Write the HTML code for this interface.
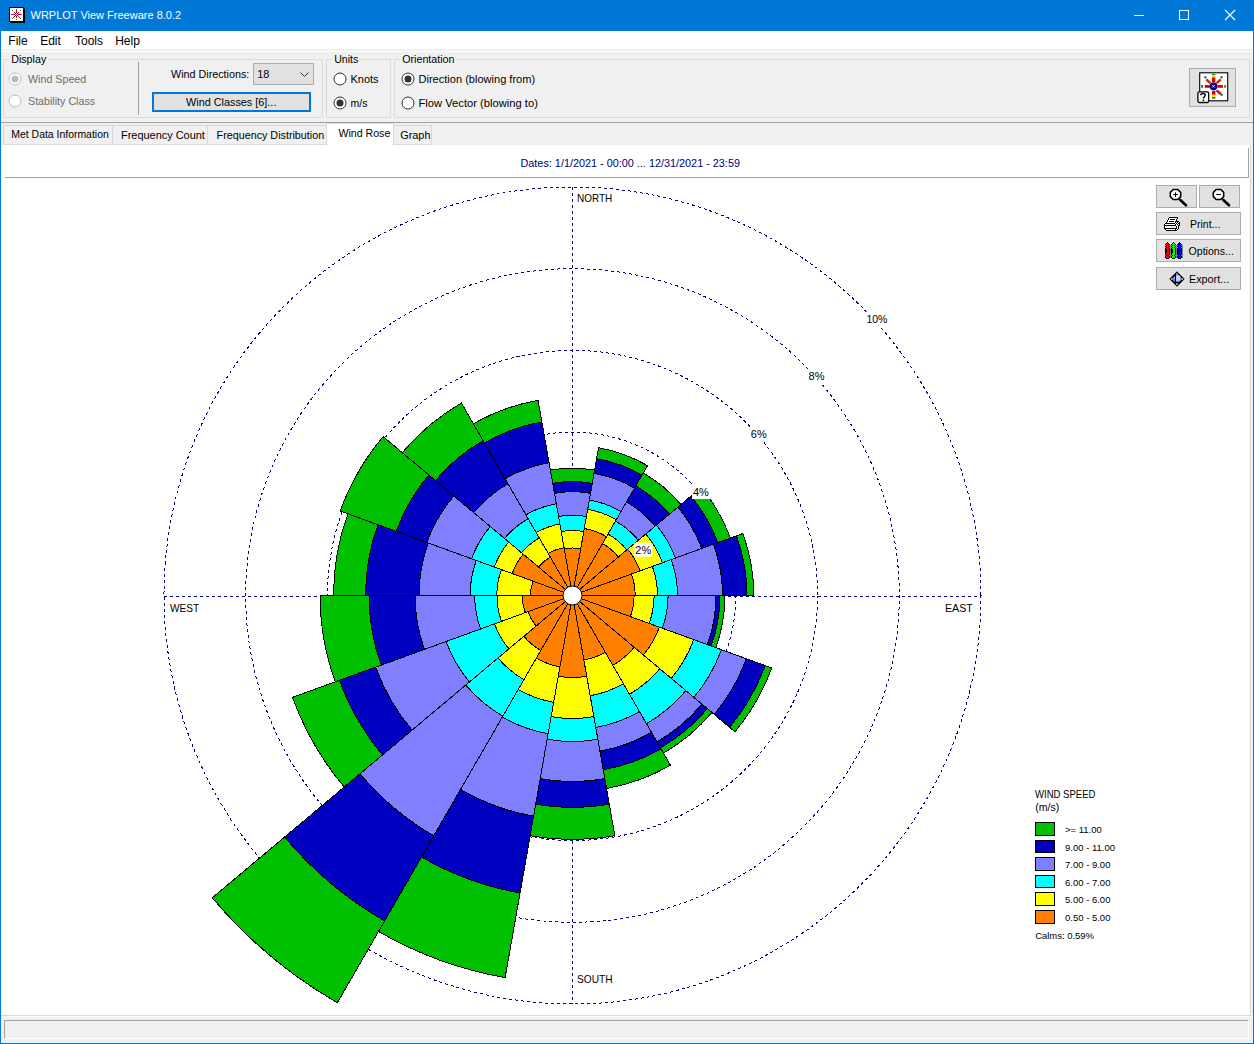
<!DOCTYPE html>
<html><head><meta charset="utf-8"><title>WRPLOT View Freeware 8.0.2</title>
<style>
html,body{margin:0;padding:0;}
body{width:1254px;height:1044px;position:relative;overflow:hidden;background:#F0F0F0;font-family:"Liberation Sans",sans-serif;}
.abs{position:absolute;}
.t{position:absolute;white-space:nowrap;}
svg text{font-family:"Liberation Sans",sans-serif;}
</style></head><body>
<div class="abs" style="left:0px;top:0px;width:1254px;height:31px;background:#0078D7"></div>
<svg class="abs" style="left:0;top:0" width="30" height="30" shape-rendering="crispEdges"><rect x="10" y="8" width="15" height="15" fill="#000"/><rect x="9" y="7" width="15" height="15" fill="#000"/><rect x="10" y="8" width="13" height="13" fill="#fff"/><rect x="16" y="9" width="1" height="1" fill="#008080"/><rect x="12" y="10" width="1" height="1" fill="#008080"/><rect x="16" y="10" width="1" height="1" fill="#FF0000"/><rect x="20" y="10" width="1" height="1" fill="#008080"/><rect x="13" y="11" width="1" height="1" fill="#FFFF00"/><rect x="16" y="11" width="1" height="1" fill="#FF0000"/><rect x="19" y="11" width="1" height="1" fill="#FFFF00"/><rect x="14" y="12" width="1" height="1" fill="#FF0000"/><rect x="16" y="12" width="1" height="1" fill="#000080"/><rect x="18" y="12" width="1" height="1" fill="#FF0000"/><rect x="15" y="13" width="1" height="1" fill="#000080"/><rect x="17" y="13" width="1" height="1" fill="#000080"/><rect x="11" y="14" width="1" height="1" fill="#008080"/><rect x="12" y="14" width="1" height="1" fill="#FF0000"/><rect x="13" y="14" width="1" height="1" fill="#FF0000"/><rect x="14" y="14" width="1" height="1" fill="#000080"/><rect x="16" y="14" width="1" height="1" fill="#FF0000"/><rect x="18" y="14" width="1" height="1" fill="#000080"/><rect x="19" y="14" width="1" height="1" fill="#FF0000"/><rect x="20" y="14" width="1" height="1" fill="#FF0000"/><rect x="21" y="14" width="1" height="1" fill="#008080"/><rect x="15" y="15" width="1" height="1" fill="#000080"/><rect x="17" y="15" width="1" height="1" fill="#000080"/><rect x="14" y="16" width="1" height="1" fill="#FF0000"/><rect x="16" y="16" width="1" height="1" fill="#000080"/><rect x="18" y="16" width="1" height="1" fill="#FF0000"/><rect x="13" y="17" width="1" height="1" fill="#FF0000"/><rect x="16" y="17" width="1" height="1" fill="#FF0000"/><rect x="19" y="17" width="1" height="1" fill="#FF0000"/><rect x="12" y="18" width="1" height="1" fill="#008080"/><rect x="16" y="18" width="1" height="1" fill="#FFFF00"/><rect x="20" y="18" width="1" height="1" fill="#008080"/><rect x="16" y="19" width="1" height="1" fill="#008080"/></svg>
<div class="t " style="left:30.5px;top:10.29px;font-size:11.0px;line-height:11.0px;color:#fff;">WRPLOT View Freeware 8.0.2</div>
<svg class="abs" style="left:1100px;top:0" width="154" height="31" shape-rendering="crispEdges"><rect x="34" y="15" width="10" height="1" fill="#fff"/><rect x="79.5" y="10.5" width="9" height="9" fill="none" stroke="#fff"/></svg>
<svg class="abs" style="left:1100px;top:0" width="154" height="31"><path d="M125,10 L135,20 M135,10 L125,20" stroke="#fff" stroke-width="1.1"/></svg>
<div class="abs" style="left:0px;top:31px;width:1px;height:1013px;background:#0078D7"></div>
<div class="abs" style="left:1253px;top:31px;width:1px;height:1013px;background:#0078D7"></div>
<div class="abs" style="left:0px;top:1043px;width:1254px;height:1px;background:#0078D7"></div>
<div class="abs" style="left:1px;top:31px;width:1252px;height:18px;background:#fff"></div>
<div class="t " style="left:8.3px;top:34.54px;font-size:12px;line-height:12px;color:#000;">File</div>
<div class="t " style="left:40.2px;top:34.54px;font-size:12px;line-height:12px;color:#000;">Edit</div>
<div class="t " style="left:75.0px;top:34.54px;font-size:12px;line-height:12px;color:#000;">Tools</div>
<div class="t " style="left:115.2px;top:34.54px;font-size:12px;line-height:12px;color:#000;">Help</div>
<div class="abs" style="left:1px;top:49px;width:1252px;height:73px;background:#F0F0F0"></div>
<div class="abs" style="left:1px;top:51px;width:1252px;height:1px;background:#FFFFFF"></div>
<div class="abs" style="left:1px;top:122px;width:1252px;height:1px;background:#A0A0A0"></div>
<div class="abs" style="left:3px;top:59px;width:320px;height:59px;border:1px solid #DCDCDC;box-sizing:border-box"></div>
<div class="abs" style="left:326px;top:59px;width:65px;height:59px;border:1px solid #DCDCDC;box-sizing:border-box"></div>
<div class="abs" style="left:394px;top:59px;width:856px;height:59px;border:1px solid #DCDCDC;box-sizing:border-box"></div>
<div class="abs" style="left:138px;top:62px;width:1px;height:53px;background:#A0A0A0"></div>
<div class="abs" style="left:9px;top:53px;width:40px;height:12px;background:#F0F0F0"></div>
<div class="t " style="left:11.2px;top:53.74px;font-size:10.7px;line-height:10.7px;color:#000;">Display</div>
<div class="abs" style="left:332px;top:53px;width:28px;height:12px;background:#F0F0F0"></div>
<div class="t " style="left:334.2px;top:54.03px;font-size:10.6px;line-height:10.6px;color:#000;">Units</div>
<div class="abs" style="left:400px;top:53px;width:56px;height:12px;background:#F0F0F0"></div>
<div class="t " style="left:402.2px;top:53.94px;font-size:10.7px;line-height:10.7px;color:#000;">Orientation</div>
<svg class="abs" style="left:8.3px;top:72.3px" width="14" height="14"><circle cx="7" cy="7" r="6" fill="#fff" stroke="#BCBCBC" stroke-width="1"/><circle cx="7" cy="7" r="3.5" fill="#BCBCBC"/></svg>
<div class="t " style="left:28.0px;top:73.84px;font-size:10.7px;line-height:10.7px;color:#6D6D6D;">Wind Speed</div>
<svg class="abs" style="left:8.3px;top:94.4px" width="14" height="14"><circle cx="7" cy="7" r="6" fill="#fff" stroke="#BCBCBC" stroke-width="1"/></svg>
<div class="t " style="left:28.0px;top:95.94px;font-size:10.7px;line-height:10.7px;color:#6D6D6D;">Stability Class</div>
<div class="t " style="left:171.0px;top:68.60px;font-size:10.75px;line-height:10.75px;color:#000;">Wind Directions:</div>
<div class="abs" style="left:253px;top:63px;width:61px;height:22px;background:#E1E1E1;border:1px solid #ADADAD;box-sizing:border-box"></div>
<div class="t " style="left:257.2px;top:69.19px;font-size:11px;line-height:11px;color:#000;">18</div>
<svg class="abs" style="left:299px;top:70px" width="12" height="10"><path d="M1.5,2.5 L5.5,6.5 L9.5,2.5" fill="none" stroke="#333" stroke-width="1"/></svg>
<div class="abs" style="left:152px;top:92px;width:159px;height:20px;background:#E1E1E1;border:2px solid #0078D7;box-sizing:border-box"></div>
<div class="t " style="left:186.0px;top:96.62px;font-size:10.85px;line-height:10.85px;color:#000;">Wind Classes [6]...</div>
<svg class="abs" style="left:333.1px;top:71.7px" width="14" height="14"><circle cx="7" cy="7" r="6" fill="#fff" stroke="#333333" stroke-width="1"/></svg>
<div class="t " style="left:350.5px;top:74.03px;font-size:10.95px;line-height:10.95px;color:#000;">Knots</div>
<svg class="abs" style="left:333.1px;top:95.6px" width="14" height="14"><circle cx="7" cy="7" r="6" fill="#fff" stroke="#333333" stroke-width="1"/><circle cx="7" cy="7" r="3.5" fill="#333333"/></svg>
<div class="t " style="left:350.5px;top:98.21px;font-size:10.5px;line-height:10.5px;color:#000;">m/s</div>
<svg class="abs" style="left:401.4px;top:71.7px" width="14" height="14"><circle cx="7" cy="7" r="6" fill="#fff" stroke="#333333" stroke-width="1"/><circle cx="7" cy="7" r="3.5" fill="#333333"/></svg>
<div class="t " style="left:418.5px;top:73.95px;font-size:11.05px;line-height:11.05px;color:#000;">Direction (blowing from)</div>
<svg class="abs" style="left:401.4px;top:95.6px" width="14" height="14"><circle cx="7" cy="7" r="6" fill="#fff" stroke="#333333" stroke-width="1"/></svg>
<div class="t " style="left:418.5px;top:97.62px;font-size:11.2px;line-height:11.2px;color:#000;">Flow Vector (blowing to)</div>
<div class="abs" style="left:1189px;top:68px;width:47px;height:39px;background:#E1E1E1;border:1px solid #ADADAD;box-sizing:border-box"></div>
<svg class="abs" style="left:1194px;top:70px" width="36" height="34"><rect x="5.7" y="2.8" width="28" height="28" fill="#fff" stroke="#000" stroke-width="1.1"/><rect x="18" y="4" width="3.4" height="1.2" fill="#208040"/><rect x="18" y="5.2" width="3.4" height="2.3" fill="#FFE000"/><rect x="18" y="7.5" width="3.4" height="5" fill="#E00000"/><rect x="18" y="20.8" width="3.4" height="4" fill="#E00000"/><rect x="18" y="24.8" width="3.4" height="2.2" fill="#FFE000"/><rect x="18" y="27" width="3.4" height="1.6" fill="#207050"/><rect x="7.2" y="15" width="1.8" height="2.8" fill="#207040"/><rect x="9" y="15" width="1.8" height="2.8" fill="#FFFF80"/><rect x="10.8" y="15" width="5" height="2.8" fill="#E00000"/><rect x="23.5" y="15" width="5.5" height="2.8" fill="#E00000"/><rect x="30.2" y="15" width="1.6" height="2.8" fill="#207050"/><g stroke-width="2.4"><line x1="12.3" y1="9.3" x2="16.5" y2="13.3" stroke="#C03000"/><line x1="26.7" y1="9.3" x2="22.5" y2="13.3" stroke="#C03000"/><line x1="22.5" y1="20.3" x2="26.7" y2="24" stroke="#E00000"/></g><rect x="10.3" y="6.2" width="2.2" height="2.2" fill="#207050" transform="rotate(45 11.4 7.3)"/><rect x="26.4" y="6.2" width="2.2" height="2.2" fill="#207050" transform="rotate(45 27.5 7.3)"/><rect x="26.6" y="23.7" width="2.2" height="2.2" fill="#207050" transform="rotate(45 27.7 24.8)"/><circle cx="19.5" cy="16.3" r="3.9" fill="#000090"/><path d="M18.3,15.1l2.4,2.4M20.7,15.1l-2.4,2.4" stroke="#fff" stroke-width="0.9"/><rect x="3.9" y="21.9" width="10.8" height="10.6" rx="1.5" fill="#FFFFE0" stroke="#000" stroke-width="1.3"/><path d="M6.8,25.3 C6.8,23.2 11.3,22.8 11.3,25 C11.3,26.6 9.3,26.8 9.3,28.6" fill="none" stroke="#000050" stroke-width="1.5"/><rect x="8.5" y="29.6" width="1.7" height="1.4" fill="#000050"/></svg>
<div class="abs" style="left:1px;top:123px;width:1252px;height:22px;background:#F0F0F0"></div>
<div class="abs" style="left:3px;top:125px;width:110px;height:20px;background:#F0F0F0;border:1px solid #D9D9D9;box-sizing:border-box"></div>
<div class="abs" style="left:112px;top:125px;width:96px;height:20px;background:#F0F0F0;border:1px solid #D9D9D9;box-sizing:border-box"></div>
<div class="abs" style="left:207px;top:125px;width:120px;height:20px;background:#F0F0F0;border:1px solid #D9D9D9;box-sizing:border-box"></div>
<div class="abs" style="left:392px;top:125px;width:40px;height:20px;background:#F0F0F0;border:1px solid #D9D9D9;box-sizing:border-box"></div>
<div class="abs" style="left:1px;top:145px;width:1250px;height:871px;background:#fff;border-right:1px solid #D9D9D9;border-bottom:1px solid #D9D9D9;box-sizing:border-box"></div>
<div class="abs" style="left:326px;top:123px;width:68px;height:23px;background:#fff;border:1px solid #D9D9D9;border-bottom:none;box-sizing:border-box"></div>
<div class="t " style="left:11.3px;top:130.15px;font-size:10.45px;line-height:10.45px;color:#000;">Met Data Information</div>
<div class="t " style="left:121.0px;top:129.73px;font-size:10.95px;line-height:10.95px;color:#000;">Frequency Count</div>
<div class="t " style="left:216.6px;top:129.90px;font-size:10.75px;line-height:10.75px;color:#000;">Frequency Distribution</div>
<div class="t " style="left:338.5px;top:128.03px;font-size:10.6px;line-height:10.6px;color:#000;">Wind Rose</div>
<div class="t " style="left:400.2px;top:129.77px;font-size:10.9px;line-height:10.9px;color:#000;">Graph</div>
<div class="abs" style="left:5px;top:148px;width:1244px;height:30px;border-right:1px solid #A0A0A0;border-bottom:1px solid #A0A0A0;box-sizing:border-box"></div>
<div class="t " style="left:520.5px;top:158.02px;font-size:10.85px;line-height:10.85px;color:#000080;">Dates: 1/1/2021 - 00:00 ... 12/31/2021 - 23:59</div>
<svg class="abs" style="left:0;top:0" width="1254" height="1044" viewBox="0 0 1254 1044" font-family="Liberation Sans, sans-serif">
<g fill="none" stroke="#000080" stroke-width="1" stroke-dasharray="3 3" shape-rendering="crispEdges">
<circle cx="572.5" cy="595.5" r="81.7"/>
<circle cx="572.5" cy="595.5" r="163.4"/>
<circle cx="572.5" cy="595.5" r="245.1"/>
<circle cx="572.5" cy="595.5" r="326.8"/>
<circle cx="572.5" cy="595.5" r="408.5"/>
<line x1="572.5" y1="187.0" x2="572.5" y2="1004.0"/>
<line x1="164.0" y1="596.5" x2="981.0" y2="596.5"/>
</g>
<g stroke="#000" stroke-width="1" stroke-linejoin="miter" shape-rendering="crispEdges">
<path fill="#00C000" d="M572.5,595.5L550.39,470.13A127.3,127.3 0 0 1 594.61,470.13ZM572.5,595.5L598.55,447.78A150,150 0 0 1 647.50,465.60ZM572.5,595.5L643.25,472.96A141.5,141.5 0 0 1 680.90,504.55ZM572.5,595.5L701.20,487.51A168,168 0 0 1 730.37,538.04ZM572.5,595.5L742.87,533.49A181.3,181.3 0 0 1 753.80,595.50ZM572.5,595.5L725.00,595.50A152.5,152.5 0 0 1 715.80,647.66ZM572.5,595.5L771.71,668.01A212,212 0 0 1 734.90,731.77ZM572.5,595.5L711.92,712.49A182,182 0 0 1 663.50,753.12ZM572.5,595.5L670.50,765.24A196,196 0 0 1 606.54,788.52ZM572.5,595.5L614.87,835.79A244,244 0 0 1 530.13,835.79ZM572.5,595.5L505.12,977.61A388,388 0 0 1 378.50,931.52ZM572.5,595.5L337.35,1002.79A470.3,470.3 0 0 1 212.23,897.80ZM572.5,595.5L344.22,787.05A298,298 0 0 1 292.47,697.42ZM572.5,595.5L335.32,681.83A252.4,252.4 0 0 1 320.10,595.50ZM572.5,595.5L333.50,595.50A239,239 0 0 1 347.91,513.76ZM572.5,595.5L340.21,510.95A247.2,247.2 0 0 1 383.13,436.60ZM572.5,595.5L402.28,452.67A222.2,222.2 0 0 1 461.40,403.07ZM572.5,595.5L473.40,423.85A198.2,198.2 0 0 1 538.08,400.31Z"/>
<path fill="#0000C0" d="M572.5,595.5L552.72,483.33A113.9,113.9 0 0 1 592.28,483.33ZM572.5,595.5L596.64,458.61A139,139 0 0 1 642.00,475.12ZM572.5,595.5L635.75,485.95A126.5,126.5 0 0 1 669.40,514.19ZM572.5,595.5L690.85,496.19A154.5,154.5 0 0 1 717.68,542.66ZM572.5,595.5L736.48,535.82A174.5,174.5 0 0 1 747.00,595.50ZM572.5,595.5L720.00,595.50A147.5,147.5 0 0 1 711.10,645.95ZM572.5,595.5L765.14,665.61A205,205 0 0 1 729.54,727.27ZM572.5,595.5L707.32,708.63A176,176 0 0 1 660.50,747.92ZM572.5,595.5L661.00,748.79A177,177 0 0 1 603.24,769.81ZM572.5,595.5L609.31,804.28A212,212 0 0 1 535.69,804.28ZM572.5,595.5L520.06,892.91A302,302 0 0 1 421.50,857.04ZM572.5,595.5L384.60,920.95A375.8,375.8 0 0 1 284.62,837.06ZM572.5,595.5L382.52,754.91A248,248 0 0 1 339.46,680.32ZM572.5,595.5L381.27,665.10A203.5,203.5 0 0 1 369.00,595.50ZM572.5,595.5L365.50,595.50A207,207 0 0 1 377.98,524.70ZM572.5,595.5L396.31,531.37A187.5,187.5 0 0 1 428.87,474.98ZM572.5,595.5L435.53,480.57A178.8,178.8 0 0 1 483.10,440.65ZM572.5,595.5L484.40,442.91A176.2,176.2 0 0 1 541.90,421.98Z"/>
<path fill="#8080FF" d="M572.5,595.5L554.48,493.28A103.8,103.8 0 0 1 590.52,493.28ZM572.5,595.5L594.03,473.38A124,124 0 0 1 634.50,488.11ZM572.5,595.5L626.50,501.97A108,108 0 0 1 655.23,526.08ZM572.5,595.5L677.83,507.12A137.5,137.5 0 0 1 701.71,548.47ZM572.5,595.5L713.45,544.20A150,150 0 0 1 722.50,595.50ZM572.5,595.5L716.00,595.50A143.5,143.5 0 0 1 707.35,644.58ZM572.5,595.5L746.34,658.77A185,185 0 0 1 714.22,714.42ZM572.5,595.5L701.96,704.13A169,169 0 0 1 657.00,741.86ZM572.5,595.5L651.50,732.33A158,158 0 0 1 599.94,751.10ZM572.5,595.5L604.80,778.67A186,186 0 0 1 540.20,778.67ZM572.5,595.5L533.60,816.10A224,224 0 0 1 460.50,789.49ZM572.5,595.5L433.80,835.74A277.4,277.4 0 0 1 360.00,773.81ZM572.5,595.5L412.01,730.16A209.5,209.5 0 0 1 375.63,667.15ZM572.5,595.5L424.50,649.37A157.5,157.5 0 0 1 415.00,595.50ZM572.5,595.5L419.00,595.50A153.5,153.5 0 0 1 428.26,543.00ZM572.5,595.5L426.85,542.49A155,155 0 0 1 453.76,495.87ZM572.5,595.5L473.68,512.58A129,129 0 0 1 508.00,483.78ZM572.5,595.5L505.10,478.76A134.8,134.8 0 0 1 549.09,462.75Z"/>
<path fill="#00FFFF" d="M572.5,595.5L558.56,516.42A80.3,80.3 0 0 1 586.44,516.42ZM572.5,595.5L589.34,499.97A97,97 0 0 1 621.00,511.50ZM572.5,595.5L615.50,521.02A86,86 0 0 1 638.38,540.22ZM572.5,595.5L656.38,525.11A109.5,109.5 0 0 1 675.40,558.05ZM572.5,595.5L671.17,559.59A105,105 0 0 1 677.50,595.50ZM572.5,595.5L668.10,595.50A95.6,95.6 0 0 1 662.33,628.20ZM572.5,595.5L721.44,649.71A158.5,158.5 0 0 1 693.92,697.38ZM572.5,595.5L685.87,690.63A148,148 0 0 1 646.50,723.67ZM572.5,595.5L639.50,711.55A134,134 0 0 1 595.77,727.46ZM572.5,595.5L597.85,739.28A146,146 0 0 1 547.15,739.28ZM572.5,595.5L548.14,733.67A140.3,140.3 0 0 1 502.35,717.00ZM572.5,595.5L502.85,716.14A139.3,139.3 0 0 1 465.79,685.04ZM572.5,595.5L469.47,681.95A134.5,134.5 0 0 1 446.11,641.50ZM572.5,595.5L480.60,628.95A97.8,97.8 0 0 1 474.70,595.50ZM572.5,595.5L470.10,595.50A102.4,102.4 0 0 1 476.28,560.48ZM572.5,595.5L471.58,558.77A107.4,107.4 0 0 1 490.23,526.46ZM572.5,595.5L504.55,538.48A88.7,88.7 0 0 1 528.15,518.68ZM572.5,595.5L525.90,514.79A93.2,93.2 0 0 1 556.32,503.72Z"/>
<path fill="#FFFF00" d="M572.5,595.5L561.21,531.49A65,65 0 0 1 583.79,531.49ZM572.5,595.5L587.69,509.33A87.5,87.5 0 0 1 616.25,519.72ZM572.5,595.5L608.00,534.01A71,71 0 0 1 626.89,549.86ZM572.5,595.5L645.81,533.99A95.7,95.7 0 0 1 662.43,562.77ZM572.5,595.5L652.37,566.43A85,85 0 0 1 657.50,595.50ZM572.5,595.5L654.10,595.50A81.6,81.6 0 0 1 649.18,623.41ZM572.5,595.5L693.72,639.62A129,129 0 0 1 671.32,678.42ZM572.5,595.5L659.83,668.78A114,114 0 0 1 629.50,694.23ZM572.5,595.5L623.40,683.66A101.8,101.8 0 0 1 590.18,695.75ZM572.5,595.5L593.86,716.63A123,123 0 0 1 551.14,716.63ZM572.5,595.5L553.66,702.35A108.5,108.5 0 0 1 518.25,689.46ZM572.5,595.5L523.90,679.68A97.2,97.2 0 0 1 498.04,657.98ZM572.5,595.5L508.92,648.85A83,83 0 0 1 494.51,623.89ZM572.5,595.5L501.55,621.32A75.5,75.5 0 0 1 497.00,595.50ZM572.5,595.5L496.80,595.50A75.7,75.7 0 0 1 501.37,569.61ZM572.5,595.5L494.32,567.04A83.2,83.2 0 0 1 508.77,542.02ZM572.5,595.5L521.56,552.75A66.5,66.5 0 0 1 539.25,537.91ZM572.5,595.5L536.20,532.63A72.6,72.6 0 0 1 559.89,524.00Z"/>
<path fill="#FF8000" d="M572.5,595.5L564.25,548.72A47.5,47.5 0 0 1 580.75,548.72ZM572.5,595.5L584.31,528.53A68,68 0 0 1 606.50,536.61ZM572.5,595.5L602.50,543.54A60,60 0 0 1 618.46,556.93ZM572.5,595.5L627.66,549.22A72,72 0 0 1 640.16,570.87ZM572.5,595.5L631.42,574.06A62.7,62.7 0 0 1 635.20,595.50ZM572.5,595.5L634.10,595.50A61.6,61.6 0 0 1 630.39,616.57ZM572.5,595.5L659.42,627.14A92.5,92.5 0 0 1 643.36,654.96ZM572.5,595.5L634.24,647.31A80.6,80.6 0 0 1 612.80,665.30ZM572.5,595.5L605.25,652.22A65.5,65.5 0 0 1 583.87,660.00ZM572.5,595.5L586.74,676.25A82,82 0 0 1 558.26,676.25ZM572.5,595.5L559.93,666.80A72.4,72.4 0 0 1 536.30,658.20ZM572.5,595.5L540.75,650.49A63.5,63.5 0 0 1 523.86,636.32ZM572.5,595.5L536.11,626.03A47.5,47.5 0 0 1 527.86,611.75ZM572.5,595.5L525.33,612.67A50.2,50.2 0 0 1 522.30,595.50ZM572.5,595.5L530.50,595.50A42,42 0 0 1 533.03,581.14ZM572.5,595.5L512.17,573.54A64.2,64.2 0 0 1 523.32,554.23ZM572.5,595.5L538.49,566.96A44.4,44.4 0 0 1 550.30,557.05ZM572.5,595.5L548.20,553.41A48.6,48.6 0 0 1 564.06,547.64Z"/>
</g>
<circle cx="572.5" cy="595.5" r="9.5" fill="#fff" stroke="#000" stroke-width="1"/>
<rect x="634.3" y="542.7" width="18" height="14" fill="#fff"/>
<text x="635.3" y="553.7" font-size="11" fill="#000">2%</text>
<rect x="692.0" y="485.0" width="18" height="14" fill="#fff"/>
<text x="693.0" y="496.0" font-size="11" fill="#000">4%</text>
<rect x="749.8" y="427.2" width="18" height="14" fill="#fff"/>
<text x="750.8" y="438.2" font-size="11" fill="#000">6%</text>
<rect x="807.6" y="369.4" width="18" height="14" fill="#fff"/>
<text x="808.6" y="380.4" font-size="11" fill="#000">8%</text>
<rect x="865.4" y="311.6" width="24" height="14" fill="#fff"/>
<text x="866.4" y="322.6" font-size="10.5" fill="#000">10%</text>
<text x="577" y="202" font-size="10.8" textLength="35.3" lengthAdjust="spacingAndGlyphs">NORTH</text>
<text x="577" y="983" font-size="10.8" textLength="35.5" lengthAdjust="spacingAndGlyphs">SOUTH</text>
<text x="170" y="612" font-size="10.8" textLength="29.2" lengthAdjust="spacingAndGlyphs">WEST</text>
<text x="945" y="612" font-size="10.8" textLength="27.9" lengthAdjust="spacingAndGlyphs">EAST</text>
</svg>
<div class="abs" style="left:1156px;top:185px;width:41px;height:23px;background:#E1E1E1;border:1px solid #ADADAD;box-sizing:border-box"></div>
<div class="abs" style="left:1199px;top:185px;width:41px;height:23px;background:#E1E1E1;border:1px solid #ADADAD;box-sizing:border-box"></div>
<svg class="abs" style="left:1156px;top:185px" width="84" height="23"><polygon points="17.2,4.5 21.8,4.5 24.7,7.4 24.7,11.6 21.8,14.5 17.2,14.5 14.3,11.6 14.3,7.4" fill="#fff" stroke="#000" stroke-width="1.5"/><path d="M17.2,9.5h4.6M19.5,7.2v4.8" stroke="#000" stroke-width="1.1"/><path d="M24.3,15 L30,20.3" stroke="#000" stroke-width="2.6" stroke-linecap="round"/><polygon points="60.2,4.5 64.8,4.5 67.7,7.4 67.7,11.6 64.8,14.5 60.2,14.5 57.3,11.6 57.3,7.4" fill="#fff" stroke="#000" stroke-width="1.5"/><path d="M60.2,9.5h4.6" stroke="#000" stroke-width="1.1"/><path d="M67.3,15 L73,20.3" stroke="#000" stroke-width="2.6" stroke-linecap="round"/></svg>
<div class="abs" style="left:1156px;top:212px;width:85px;height:23px;background:#E1E1E1;border:1px solid #ADADAD;box-sizing:border-box"></div>
<div class="abs" style="left:1156px;top:239px;width:85px;height:23px;background:#E1E1E1;border:1px solid #ADADAD;box-sizing:border-box"></div>
<div class="abs" style="left:1156px;top:267px;width:85px;height:23px;background:#E1E1E1;border:1px solid #ADADAD;box-sizing:border-box"></div>
<div class="t " style="left:1190.0px;top:219.21px;font-size:10.5px;line-height:10.5px;color:#000;">Print...</div>
<div class="t " style="left:1188.5px;top:246.23px;font-size:10.6px;line-height:10.6px;color:#000;">Options...</div>
<div class="t " style="left:1189.0px;top:273.86px;font-size:10.8px;line-height:10.8px;color:#000;">Export...</div>
<svg class="abs" style="left:1164px;top:217px" width="16" height="14" shape-rendering="crispEdges"><rect x="5" y="0" width="1" height="1" fill="#000"/><rect x="6" y="0" width="1" height="1" fill="#000"/><rect x="7" y="0" width="1" height="1" fill="#000"/><rect x="8" y="0" width="1" height="1" fill="#000"/><rect x="9" y="0" width="1" height="1" fill="#000"/><rect x="10" y="0" width="1" height="1" fill="#000"/><rect x="11" y="0" width="1" height="1" fill="#000"/><rect x="12" y="0" width="1" height="1" fill="#000"/><rect x="13" y="0" width="1" height="1" fill="#000"/><rect x="4" y="1" width="1" height="1" fill="#000"/><rect x="5" y="1" width="1" height="1" fill="#fff"/><rect x="6" y="1" width="1" height="1" fill="#fff"/><rect x="7" y="1" width="1" height="1" fill="#fff"/><rect x="8" y="1" width="1" height="1" fill="#fff"/><rect x="9" y="1" width="1" height="1" fill="#fff"/><rect x="10" y="1" width="1" height="1" fill="#fff"/><rect x="11" y="1" width="1" height="1" fill="#fff"/><rect x="12" y="1" width="1" height="1" fill="#fff"/><rect x="13" y="1" width="1" height="1" fill="#000"/><rect x="4" y="2" width="1" height="1" fill="#000"/><rect x="5" y="2" width="1" height="1" fill="#fff"/><rect x="6" y="2" width="1" height="1" fill="#000"/><rect x="7" y="2" width="1" height="1" fill="#000"/><rect x="8" y="2" width="1" height="1" fill="#000"/><rect x="9" y="2" width="1" height="1" fill="#000"/><rect x="10" y="2" width="1" height="1" fill="#000"/><rect x="11" y="2" width="1" height="1" fill="#fff"/><rect x="12" y="2" width="1" height="1" fill="#000"/><rect x="3" y="3" width="1" height="1" fill="#000"/><rect x="4" y="3" width="1" height="1" fill="#fff"/><rect x="5" y="3" width="1" height="1" fill="#fff"/><rect x="6" y="3" width="1" height="1" fill="#fff"/><rect x="7" y="3" width="1" height="1" fill="#fff"/><rect x="8" y="3" width="1" height="1" fill="#fff"/><rect x="9" y="3" width="1" height="1" fill="#fff"/><rect x="10" y="3" width="1" height="1" fill="#fff"/><rect x="11" y="3" width="1" height="1" fill="#fff"/><rect x="12" y="3" width="1" height="1" fill="#000"/><rect x="3" y="4" width="1" height="1" fill="#000"/><rect x="4" y="4" width="1" height="1" fill="#fff"/><rect x="5" y="4" width="1" height="1" fill="#000"/><rect x="6" y="4" width="1" height="1" fill="#000"/><rect x="7" y="4" width="1" height="1" fill="#000"/><rect x="8" y="4" width="1" height="1" fill="#000"/><rect x="9" y="4" width="1" height="1" fill="#000"/><rect x="10" y="4" width="1" height="1" fill="#fff"/><rect x="11" y="4" width="1" height="1" fill="#000"/><rect x="12" y="4" width="1" height="1" fill="#000"/><rect x="13" y="4" width="1" height="1" fill="#000"/><rect x="14" y="4" width="1" height="1" fill="#000"/><rect x="2" y="5" width="1" height="1" fill="#000"/><rect x="3" y="5" width="1" height="1" fill="#fff"/><rect x="4" y="5" width="1" height="1" fill="#fff"/><rect x="5" y="5" width="1" height="1" fill="#fff"/><rect x="6" y="5" width="1" height="1" fill="#fff"/><rect x="7" y="5" width="1" height="1" fill="#fff"/><rect x="8" y="5" width="1" height="1" fill="#fff"/><rect x="9" y="5" width="1" height="1" fill="#fff"/><rect x="10" y="5" width="1" height="1" fill="#fff"/><rect x="11" y="5" width="1" height="1" fill="#000"/><rect x="12" y="5" width="1" height="1" fill="#fff"/><rect x="13" y="5" width="1" height="1" fill="#000"/><rect x="14" y="5" width="1" height="1" fill="#fff"/><rect x="15" y="5" width="1" height="1" fill="#000"/><rect x="1" y="6" width="1" height="1" fill="#000"/><rect x="2" y="6" width="1" height="1" fill="#000"/><rect x="3" y="6" width="1" height="1" fill="#000"/><rect x="4" y="6" width="1" height="1" fill="#000"/><rect x="5" y="6" width="1" height="1" fill="#000"/><rect x="6" y="6" width="1" height="1" fill="#000"/><rect x="7" y="6" width="1" height="1" fill="#000"/><rect x="8" y="6" width="1" height="1" fill="#000"/><rect x="9" y="6" width="1" height="1" fill="#000"/><rect x="10" y="6" width="1" height="1" fill="#000"/><rect x="11" y="6" width="1" height="1" fill="#fff"/><rect x="12" y="6" width="1" height="1" fill="#000"/><rect x="13" y="6" width="1" height="1" fill="#fff"/><rect x="14" y="6" width="1" height="1" fill="#000"/><rect x="15" y="6" width="1" height="1" fill="#000"/><rect x="0" y="7" width="1" height="1" fill="#000"/><rect x="1" y="7" width="1" height="1" fill="#fff"/><rect x="2" y="7" width="1" height="1" fill="#fff"/><rect x="3" y="7" width="1" height="1" fill="#fff"/><rect x="4" y="7" width="1" height="1" fill="#fff"/><rect x="5" y="7" width="1" height="1" fill="#fff"/><rect x="6" y="7" width="1" height="1" fill="#fff"/><rect x="7" y="7" width="1" height="1" fill="#fff"/><rect x="8" y="7" width="1" height="1" fill="#fff"/><rect x="9" y="7" width="1" height="1" fill="#fff"/><rect x="10" y="7" width="1" height="1" fill="#fff"/><rect x="11" y="7" width="1" height="1" fill="#000"/><rect x="12" y="7" width="1" height="1" fill="#fff"/><rect x="13" y="7" width="1" height="1" fill="#000"/><rect x="14" y="7" width="1" height="1" fill="#fff"/><rect x="15" y="7" width="1" height="1" fill="#000"/><rect x="0" y="8" width="1" height="1" fill="#000"/><rect x="1" y="8" width="1" height="1" fill="#000"/><rect x="2" y="8" width="1" height="1" fill="#000"/><rect x="3" y="8" width="1" height="1" fill="#000"/><rect x="4" y="8" width="1" height="1" fill="#000"/><rect x="5" y="8" width="1" height="1" fill="#000"/><rect x="6" y="8" width="1" height="1" fill="#000"/><rect x="7" y="8" width="1" height="1" fill="#000"/><rect x="8" y="8" width="1" height="1" fill="#000"/><rect x="9" y="8" width="1" height="1" fill="#000"/><rect x="10" y="8" width="1" height="1" fill="#000"/><rect x="11" y="8" width="1" height="1" fill="#000"/><rect x="12" y="8" width="1" height="1" fill="#fff"/><rect x="13" y="8" width="1" height="1" fill="#fff"/><rect x="14" y="8" width="1" height="1" fill="#000"/><rect x="15" y="8" width="1" height="1" fill="#000"/><rect x="0" y="9" width="1" height="1" fill="#000"/><rect x="1" y="9" width="1" height="1" fill="#fff"/><rect x="2" y="9" width="1" height="1" fill="#fff"/><rect x="3" y="9" width="1" height="1" fill="#fff"/><rect x="4" y="9" width="1" height="1" fill="#fff"/><rect x="5" y="9" width="1" height="1" fill="#fff"/><rect x="6" y="9" width="1" height="1" fill="#fff"/><rect x="7" y="9" width="1" height="1" fill="#fff"/><rect x="8" y="9" width="1" height="1" fill="#fff"/><rect x="9" y="9" width="1" height="1" fill="#fff"/><rect x="10" y="9" width="1" height="1" fill="#fff"/><rect x="11" y="9" width="1" height="1" fill="#fff"/><rect x="12" y="9" width="1" height="1" fill="#000"/><rect x="13" y="9" width="1" height="1" fill="#fff"/><rect x="14" y="9" width="1" height="1" fill="#000"/><rect x="0" y="10" width="1" height="1" fill="#000"/><rect x="1" y="10" width="1" height="1" fill="#fff"/><rect x="2" y="10" width="1" height="1" fill="#fff"/><rect x="3" y="10" width="1" height="1" fill="#fff"/><rect x="4" y="10" width="1" height="1" fill="#fff"/><rect x="5" y="10" width="1" height="1" fill="#fff"/><rect x="6" y="10" width="1" height="1" fill="#fff"/><rect x="7" y="10" width="1" height="1" fill="#FFFF00"/><rect x="8" y="10" width="1" height="1" fill="#FFFF00"/><rect x="9" y="10" width="1" height="1" fill="#FFFF00"/><rect x="10" y="10" width="1" height="1" fill="#fff"/><rect x="11" y="10" width="1" height="1" fill="#fff"/><rect x="12" y="10" width="1" height="1" fill="#000"/><rect x="13" y="10" width="1" height="1" fill="#fff"/><rect x="14" y="10" width="1" height="1" fill="#000"/><rect x="0" y="11" width="1" height="1" fill="#000"/><rect x="1" y="11" width="1" height="1" fill="#000"/><rect x="2" y="11" width="1" height="1" fill="#000"/><rect x="3" y="11" width="1" height="1" fill="#000"/><rect x="4" y="11" width="1" height="1" fill="#000"/><rect x="5" y="11" width="1" height="1" fill="#000"/><rect x="6" y="11" width="1" height="1" fill="#000"/><rect x="7" y="11" width="1" height="1" fill="#000"/><rect x="8" y="11" width="1" height="1" fill="#000"/><rect x="9" y="11" width="1" height="1" fill="#000"/><rect x="10" y="11" width="1" height="1" fill="#000"/><rect x="11" y="11" width="1" height="1" fill="#000"/><rect x="12" y="11" width="1" height="1" fill="#000"/><rect x="13" y="11" width="1" height="1" fill="#fff"/><rect x="14" y="11" width="1" height="1" fill="#000"/><rect x="1" y="12" width="1" height="1" fill="#000"/><rect x="2" y="12" width="1" height="1" fill="#fff"/><rect x="3" y="12" width="1" height="1" fill="#fff"/><rect x="4" y="12" width="1" height="1" fill="#fff"/><rect x="5" y="12" width="1" height="1" fill="#fff"/><rect x="6" y="12" width="1" height="1" fill="#fff"/><rect x="7" y="12" width="1" height="1" fill="#fff"/><rect x="8" y="12" width="1" height="1" fill="#fff"/><rect x="9" y="12" width="1" height="1" fill="#fff"/><rect x="10" y="12" width="1" height="1" fill="#fff"/><rect x="11" y="12" width="1" height="1" fill="#000"/><rect x="12" y="12" width="1" height="1" fill="#fff"/><rect x="13" y="12" width="1" height="1" fill="#000"/><rect x="2" y="13" width="1" height="1" fill="#000"/><rect x="3" y="13" width="1" height="1" fill="#000"/><rect x="4" y="13" width="1" height="1" fill="#000"/><rect x="5" y="13" width="1" height="1" fill="#000"/><rect x="6" y="13" width="1" height="1" fill="#000"/><rect x="7" y="13" width="1" height="1" fill="#000"/><rect x="8" y="13" width="1" height="1" fill="#000"/><rect x="9" y="13" width="1" height="1" fill="#000"/><rect x="10" y="13" width="1" height="1" fill="#000"/><rect x="11" y="13" width="1" height="1" fill="#000"/><rect x="12" y="13" width="1" height="1" fill="#000"/></svg>
<svg class="abs" style="left:1165px;top:242px" width="20" height="17" shape-rendering="crispEdges"><rect x="5" y="3" width="1" height="13" fill="#808080"/><rect x="11" y="3" width="1" height="13" fill="#808080"/><rect x="17" y="3" width="1" height="13" fill="#808080"/><rect x="2" y="0" width="1" height="1" fill="#000"/><rect x="1" y="1" width="1" height="1" fill="#000"/><rect x="2" y="1" width="1" height="1" fill="#FF0000"/><rect x="3" y="1" width="1" height="1" fill="#000"/><rect x="0" y="2" width="1" height="1" fill="#000"/><rect x="1" y="2" width="1" height="1" fill="#FF0000"/><rect x="2" y="2" width="1" height="1" fill="#FF0000"/><rect x="3" y="2" width="1" height="1" fill="#FF0000"/><rect x="4" y="2" width="1" height="1" fill="#000"/><rect x="0" y="3" width="1" height="1" fill="#808080"/><rect x="1" y="3" width="1" height="1" fill="#000"/><rect x="2" y="3" width="1" height="1" fill="#FF0000"/><rect x="3" y="3" width="1" height="1" fill="#000"/><rect x="4" y="3" width="1" height="1" fill="#808080"/><rect x="0" y="4" width="1" height="1" fill="#000"/><rect x="1" y="4" width="1" height="1" fill="#FF0000"/><rect x="2" y="4" width="1" height="1" fill="#FF0000"/><rect x="3" y="4" width="1" height="1" fill="#FF0000"/><rect x="4" y="4" width="1" height="1" fill="#000"/><rect x="0" y="5" width="1" height="1" fill="#808080"/><rect x="1" y="5" width="1" height="1" fill="#000"/><rect x="2" y="5" width="1" height="1" fill="#FF0000"/><rect x="3" y="5" width="1" height="1" fill="#000"/><rect x="4" y="5" width="1" height="1" fill="#808080"/><rect x="0" y="6" width="1" height="1" fill="#000"/><rect x="1" y="6" width="1" height="1" fill="#FF0000"/><rect x="2" y="6" width="1" height="1" fill="#FF0000"/><rect x="3" y="6" width="1" height="1" fill="#FF0000"/><rect x="4" y="6" width="1" height="1" fill="#000"/><rect x="0" y="7" width="1" height="1" fill="#000"/><rect x="1" y="7" width="1" height="1" fill="#000"/><rect x="2" y="7" width="1" height="1" fill="#FF0000"/><rect x="3" y="7" width="1" height="1" fill="#FF0000"/><rect x="4" y="7" width="1" height="1" fill="#000"/><rect x="0" y="8" width="1" height="1" fill="#000"/><rect x="1" y="8" width="1" height="1" fill="#000"/><rect x="2" y="8" width="1" height="1" fill="#FF0000"/><rect x="3" y="8" width="1" height="1" fill="#FF0000"/><rect x="4" y="8" width="1" height="1" fill="#000"/><rect x="0" y="9" width="1" height="1" fill="#000"/><rect x="1" y="9" width="1" height="1" fill="#000"/><rect x="2" y="9" width="1" height="1" fill="#FF0000"/><rect x="3" y="9" width="1" height="1" fill="#FF0000"/><rect x="4" y="9" width="1" height="1" fill="#000"/><rect x="0" y="10" width="1" height="1" fill="#000"/><rect x="1" y="10" width="1" height="1" fill="#000"/><rect x="2" y="10" width="1" height="1" fill="#FF0000"/><rect x="3" y="10" width="1" height="1" fill="#FF0000"/><rect x="4" y="10" width="1" height="1" fill="#000"/><rect x="0" y="11" width="1" height="1" fill="#000"/><rect x="1" y="11" width="1" height="1" fill="#FF0000"/><rect x="2" y="11" width="1" height="1" fill="#FF0000"/><rect x="3" y="11" width="1" height="1" fill="#FF0000"/><rect x="4" y="11" width="1" height="1" fill="#000"/><rect x="0" y="12" width="1" height="1" fill="#000"/><rect x="1" y="12" width="1" height="1" fill="#FF0000"/><rect x="2" y="12" width="1" height="1" fill="#FF0000"/><rect x="3" y="12" width="1" height="1" fill="#FF0000"/><rect x="4" y="12" width="1" height="1" fill="#000"/><rect x="0" y="13" width="1" height="1" fill="#808080"/><rect x="1" y="13" width="1" height="1" fill="#000"/><rect x="2" y="13" width="1" height="1" fill="#FF0000"/><rect x="3" y="13" width="1" height="1" fill="#000"/><rect x="4" y="13" width="1" height="1" fill="#808080"/><rect x="0" y="14" width="1" height="1" fill="#000"/><rect x="1" y="14" width="1" height="1" fill="#FF0000"/><rect x="2" y="14" width="1" height="1" fill="#FF0000"/><rect x="3" y="14" width="1" height="1" fill="#FF0000"/><rect x="4" y="14" width="1" height="1" fill="#000"/><rect x="0" y="15" width="1" height="1" fill="#000"/><rect x="1" y="15" width="1" height="1" fill="#FF0000"/><rect x="2" y="15" width="1" height="1" fill="#FF0000"/><rect x="3" y="15" width="1" height="1" fill="#FF0000"/><rect x="4" y="15" width="1" height="1" fill="#000"/><rect x="1" y="16" width="1" height="1" fill="#000"/><rect x="2" y="16" width="1" height="1" fill="#000"/><rect x="3" y="16" width="1" height="1" fill="#000"/><rect x="8" y="0" width="1" height="1" fill="#000"/><rect x="7" y="1" width="1" height="1" fill="#000"/><rect x="8" y="1" width="1" height="1" fill="#00FF00"/><rect x="9" y="1" width="1" height="1" fill="#000"/><rect x="6" y="2" width="1" height="1" fill="#000"/><rect x="7" y="2" width="1" height="1" fill="#00FF00"/><rect x="8" y="2" width="1" height="1" fill="#00FF00"/><rect x="9" y="2" width="1" height="1" fill="#00FF00"/><rect x="10" y="2" width="1" height="1" fill="#000"/><rect x="6" y="3" width="1" height="1" fill="#808080"/><rect x="7" y="3" width="1" height="1" fill="#000"/><rect x="8" y="3" width="1" height="1" fill="#00FF00"/><rect x="9" y="3" width="1" height="1" fill="#000"/><rect x="10" y="3" width="1" height="1" fill="#808080"/><rect x="6" y="4" width="1" height="1" fill="#000"/><rect x="7" y="4" width="1" height="1" fill="#00FF00"/><rect x="8" y="4" width="1" height="1" fill="#00FF00"/><rect x="9" y="4" width="1" height="1" fill="#00FF00"/><rect x="10" y="4" width="1" height="1" fill="#000"/><rect x="6" y="5" width="1" height="1" fill="#808080"/><rect x="7" y="5" width="1" height="1" fill="#000"/><rect x="8" y="5" width="1" height="1" fill="#00FF00"/><rect x="9" y="5" width="1" height="1" fill="#000"/><rect x="10" y="5" width="1" height="1" fill="#808080"/><rect x="6" y="6" width="1" height="1" fill="#000"/><rect x="7" y="6" width="1" height="1" fill="#00FF00"/><rect x="8" y="6" width="1" height="1" fill="#00FF00"/><rect x="9" y="6" width="1" height="1" fill="#00FF00"/><rect x="10" y="6" width="1" height="1" fill="#000"/><rect x="6" y="7" width="1" height="1" fill="#000"/><rect x="7" y="7" width="1" height="1" fill="#000"/><rect x="8" y="7" width="1" height="1" fill="#00FF00"/><rect x="9" y="7" width="1" height="1" fill="#00FF00"/><rect x="10" y="7" width="1" height="1" fill="#000"/><rect x="6" y="8" width="1" height="1" fill="#000"/><rect x="7" y="8" width="1" height="1" fill="#000"/><rect x="8" y="8" width="1" height="1" fill="#00FF00"/><rect x="9" y="8" width="1" height="1" fill="#00FF00"/><rect x="10" y="8" width="1" height="1" fill="#000"/><rect x="6" y="9" width="1" height="1" fill="#000"/><rect x="7" y="9" width="1" height="1" fill="#000"/><rect x="8" y="9" width="1" height="1" fill="#00FF00"/><rect x="9" y="9" width="1" height="1" fill="#00FF00"/><rect x="10" y="9" width="1" height="1" fill="#000"/><rect x="6" y="10" width="1" height="1" fill="#000"/><rect x="7" y="10" width="1" height="1" fill="#000"/><rect x="8" y="10" width="1" height="1" fill="#00FF00"/><rect x="9" y="10" width="1" height="1" fill="#00FF00"/><rect x="10" y="10" width="1" height="1" fill="#000"/><rect x="6" y="11" width="1" height="1" fill="#000"/><rect x="7" y="11" width="1" height="1" fill="#00FF00"/><rect x="8" y="11" width="1" height="1" fill="#00FF00"/><rect x="9" y="11" width="1" height="1" fill="#00FF00"/><rect x="10" y="11" width="1" height="1" fill="#000"/><rect x="6" y="12" width="1" height="1" fill="#000"/><rect x="7" y="12" width="1" height="1" fill="#00FF00"/><rect x="8" y="12" width="1" height="1" fill="#00FF00"/><rect x="9" y="12" width="1" height="1" fill="#00FF00"/><rect x="10" y="12" width="1" height="1" fill="#000"/><rect x="6" y="13" width="1" height="1" fill="#808080"/><rect x="7" y="13" width="1" height="1" fill="#000"/><rect x="8" y="13" width="1" height="1" fill="#00FF00"/><rect x="9" y="13" width="1" height="1" fill="#000"/><rect x="10" y="13" width="1" height="1" fill="#808080"/><rect x="6" y="14" width="1" height="1" fill="#000"/><rect x="7" y="14" width="1" height="1" fill="#00FF00"/><rect x="8" y="14" width="1" height="1" fill="#00FF00"/><rect x="9" y="14" width="1" height="1" fill="#00FF00"/><rect x="10" y="14" width="1" height="1" fill="#000"/><rect x="6" y="15" width="1" height="1" fill="#000"/><rect x="7" y="15" width="1" height="1" fill="#00FF00"/><rect x="8" y="15" width="1" height="1" fill="#00FF00"/><rect x="9" y="15" width="1" height="1" fill="#00FF00"/><rect x="10" y="15" width="1" height="1" fill="#000"/><rect x="7" y="16" width="1" height="1" fill="#000"/><rect x="8" y="16" width="1" height="1" fill="#000"/><rect x="9" y="16" width="1" height="1" fill="#000"/><rect x="14" y="0" width="1" height="1" fill="#000"/><rect x="13" y="1" width="1" height="1" fill="#000"/><rect x="14" y="1" width="1" height="1" fill="#0000FF"/><rect x="15" y="1" width="1" height="1" fill="#000"/><rect x="12" y="2" width="1" height="1" fill="#000"/><rect x="13" y="2" width="1" height="1" fill="#0000FF"/><rect x="14" y="2" width="1" height="1" fill="#0000FF"/><rect x="15" y="2" width="1" height="1" fill="#0000FF"/><rect x="16" y="2" width="1" height="1" fill="#000"/><rect x="12" y="3" width="1" height="1" fill="#808080"/><rect x="13" y="3" width="1" height="1" fill="#000"/><rect x="14" y="3" width="1" height="1" fill="#0000FF"/><rect x="15" y="3" width="1" height="1" fill="#000"/><rect x="16" y="3" width="1" height="1" fill="#808080"/><rect x="12" y="4" width="1" height="1" fill="#000"/><rect x="13" y="4" width="1" height="1" fill="#0000FF"/><rect x="14" y="4" width="1" height="1" fill="#0000FF"/><rect x="15" y="4" width="1" height="1" fill="#0000FF"/><rect x="16" y="4" width="1" height="1" fill="#000"/><rect x="12" y="5" width="1" height="1" fill="#808080"/><rect x="13" y="5" width="1" height="1" fill="#000"/><rect x="14" y="5" width="1" height="1" fill="#0000FF"/><rect x="15" y="5" width="1" height="1" fill="#000"/><rect x="16" y="5" width="1" height="1" fill="#808080"/><rect x="12" y="6" width="1" height="1" fill="#000"/><rect x="13" y="6" width="1" height="1" fill="#0000FF"/><rect x="14" y="6" width="1" height="1" fill="#0000FF"/><rect x="15" y="6" width="1" height="1" fill="#0000FF"/><rect x="16" y="6" width="1" height="1" fill="#000"/><rect x="12" y="7" width="1" height="1" fill="#000"/><rect x="13" y="7" width="1" height="1" fill="#000"/><rect x="14" y="7" width="1" height="1" fill="#0000FF"/><rect x="15" y="7" width="1" height="1" fill="#0000FF"/><rect x="16" y="7" width="1" height="1" fill="#000"/><rect x="12" y="8" width="1" height="1" fill="#000"/><rect x="13" y="8" width="1" height="1" fill="#000"/><rect x="14" y="8" width="1" height="1" fill="#0000FF"/><rect x="15" y="8" width="1" height="1" fill="#0000FF"/><rect x="16" y="8" width="1" height="1" fill="#000"/><rect x="12" y="9" width="1" height="1" fill="#000"/><rect x="13" y="9" width="1" height="1" fill="#000"/><rect x="14" y="9" width="1" height="1" fill="#0000FF"/><rect x="15" y="9" width="1" height="1" fill="#0000FF"/><rect x="16" y="9" width="1" height="1" fill="#000"/><rect x="12" y="10" width="1" height="1" fill="#000"/><rect x="13" y="10" width="1" height="1" fill="#000"/><rect x="14" y="10" width="1" height="1" fill="#0000FF"/><rect x="15" y="10" width="1" height="1" fill="#0000FF"/><rect x="16" y="10" width="1" height="1" fill="#000"/><rect x="12" y="11" width="1" height="1" fill="#000"/><rect x="13" y="11" width="1" height="1" fill="#0000FF"/><rect x="14" y="11" width="1" height="1" fill="#0000FF"/><rect x="15" y="11" width="1" height="1" fill="#0000FF"/><rect x="16" y="11" width="1" height="1" fill="#000"/><rect x="12" y="12" width="1" height="1" fill="#000"/><rect x="13" y="12" width="1" height="1" fill="#0000FF"/><rect x="14" y="12" width="1" height="1" fill="#0000FF"/><rect x="15" y="12" width="1" height="1" fill="#0000FF"/><rect x="16" y="12" width="1" height="1" fill="#000"/><rect x="12" y="13" width="1" height="1" fill="#808080"/><rect x="13" y="13" width="1" height="1" fill="#000"/><rect x="14" y="13" width="1" height="1" fill="#0000FF"/><rect x="15" y="13" width="1" height="1" fill="#000"/><rect x="16" y="13" width="1" height="1" fill="#808080"/><rect x="12" y="14" width="1" height="1" fill="#000"/><rect x="13" y="14" width="1" height="1" fill="#0000FF"/><rect x="14" y="14" width="1" height="1" fill="#0000FF"/><rect x="15" y="14" width="1" height="1" fill="#0000FF"/><rect x="16" y="14" width="1" height="1" fill="#000"/><rect x="12" y="15" width="1" height="1" fill="#000"/><rect x="13" y="15" width="1" height="1" fill="#0000FF"/><rect x="14" y="15" width="1" height="1" fill="#0000FF"/><rect x="15" y="15" width="1" height="1" fill="#0000FF"/><rect x="16" y="15" width="1" height="1" fill="#000"/><rect x="13" y="16" width="1" height="1" fill="#000"/><rect x="14" y="16" width="1" height="1" fill="#000"/><rect x="15" y="16" width="1" height="1" fill="#000"/></svg>
<svg class="abs" style="left:1169px;top:271px" width="16" height="16"><path d="M8,1.5 L14.5,8 L8,14.5 L1.5,8z" fill="#7878E8" stroke="#000" stroke-width="1.6"/><circle cx="8.5" cy="7" r="3" fill="#B8DCFF"/><path d="M6.5,4 V11.5 H12" fill="none" stroke="#000" stroke-width="1.1"/><circle cx="8" cy="2.6" r="0.7" fill="#fff"/><circle cx="8" cy="13.4" r="0.7" fill="#fff"/><circle cx="2.6" cy="8" r="0.7" fill="#fff"/><circle cx="13.4" cy="8" r="0.7" fill="#fff"/></svg>
<div class="t " style="left:1035.2px;top:789.23px;font-size:10.6px;line-height:10.6px;color:#000;transform:scaleX(0.9);transform-origin:0 0;">WIND SPEED</div>
<div class="t " style="left:1035.2px;top:801.63px;font-size:10.6px;line-height:10.6px;color:#000;">(m/s)</div>
<div class="abs" style="left:1035px;top:822px;width:20px;height:14px;background:#00C000;border:1px solid #000;box-sizing:border-box"></div>
<div class="t " style="left:1065.0px;top:824.96px;font-size:9.5px;line-height:9.5px;color:#000;">&gt;= 11.00</div>
<div class="abs" style="left:1035px;top:840px;width:20px;height:13px;background:#0000C0;border:1px solid #000;box-sizing:border-box"></div>
<div class="t " style="left:1065.0px;top:842.56px;font-size:9.5px;line-height:9.5px;color:#000;">9.00 - 11.00</div>
<div class="abs" style="left:1035px;top:857px;width:20px;height:14px;background:#8080FF;border:1px solid #000;box-sizing:border-box"></div>
<div class="t " style="left:1065.0px;top:860.16px;font-size:9.5px;line-height:9.5px;color:#000;">7.00 - 9.00</div>
<div class="abs" style="left:1035px;top:875px;width:20px;height:13px;background:#00FFFF;border:1px solid #000;box-sizing:border-box"></div>
<div class="t " style="left:1065.0px;top:877.76px;font-size:9.5px;line-height:9.5px;color:#000;">6.00 - 7.00</div>
<div class="abs" style="left:1035px;top:892px;width:20px;height:14px;background:#FFFF00;border:1px solid #000;box-sizing:border-box"></div>
<div class="t " style="left:1065.0px;top:895.36px;font-size:9.5px;line-height:9.5px;color:#000;">5.00 - 6.00</div>
<div class="abs" style="left:1035px;top:910px;width:20px;height:14px;background:#FF8000;border:1px solid #000;box-sizing:border-box"></div>
<div class="t " style="left:1065.0px;top:912.96px;font-size:9.5px;line-height:9.5px;color:#000;">0.50 - 5.00</div>
<div class="t " style="left:1035.2px;top:930.80px;font-size:9.45px;line-height:9.45px;color:#000;">Calms: 0.59%</div>
<div class="abs" style="left:1px;top:1016px;width:1252px;height:27px;background:#F0F0F0;border-top:1px solid #FAFAFA;box-sizing:border-box"></div>
<div class="abs" style="left:4px;top:1020px;width:1245px;height:19px;background:#F0F0F0;border-top:1px solid #A0A0A0;border-left:1px solid #A0A0A0;border-bottom:1px solid #fff;border-right:1px solid #fff;box-sizing:border-box"></div>
</body></html>
